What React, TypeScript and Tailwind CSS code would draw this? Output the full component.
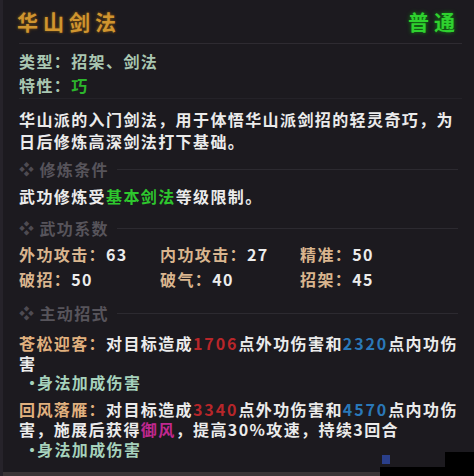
import React from "react";

const font = { fontFamily: '"Noto Sans CJK SC", "Noto Sans", sans-serif' };

function SectionHeader({ text }: { text: string }) {
  return (
    <div className="flex items-center h-[22px] text-[16px] font-bold tracking-[1.4px] text-[#57545b]">
      <span className="text-[15px] mr-[4px] text-[#4e4b52]">❖</span>
      <span>{text}</span>
      <div className="flex-1 h-px bg-[#2c2a30] ml-[8px] mr-[2px]" />
    </div>
  );
}

function Bullet() {
  return (
    <div className="flex items-center leading-[20px] text-[#a6d2bc] pl-[5px]">
      <span className="inline-block w-[9px] text-center mr-[4px]">·</span>
      <span>身法加成伤害</span>
    </div>
  );
}

export default function App() {
  return (
    <div
      style={font}
      className="relative w-[474px] h-[476px] overflow-hidden bg-[#1c1a1f] border-l-[3px] border-[#26232a]"
    >
      <div className="pl-[16px] pr-[14px]">
        {/* header */}
        <div className="h-[44px] flex items-center justify-between border-b border-[#2e2b31] mr-[-2px] pr-[2px]">
          <span className="ml-[-2px] text-[21px] font-bold tracking-[5px] text-[#d0952f] [text-shadow:0_0_3px_#8a5a10]">
            华山剑法
          </span>
          <span className="text-[21px] font-bold tracking-[5px] text-[#2fd12f] [text-shadow:0_0_4px_#0f8a0f]">
            普通
          </span>
        </div>

        <div className="text-[16px] font-bold tracking-[1.4px]">
          <div className="mt-[5px] leading-[24px] text-[#a9c6b1]">类型：招架、剑法</div>
          <div className="leading-[24px] text-[#a9c6b1]">
            特性：<span className="text-[#2cb52c]">巧</span>
          </div>
          <div className="h-px bg-[#242228] mt-[1px] mr-[-2px]" />

          <div className="mt-[9px] leading-[22px] text-[#ebebeb]">
            华山派的入门剑法，用于体悟华山派剑招的轻灵奇巧，为日后修炼高深剑法打下基础。
          </div>

          <div className="mt-[6px]">
            <SectionHeader text="修炼条件" />
          </div>
          <div className="mt-[5px] leading-[22px] text-[#ebebeb]">
            武功修炼受<span className="text-[#2ec72e]">基本剑法</span>等级限制。
          </div>

          <div className="mt-[10px]">
            <SectionHeader text="武功系数" />
          </div>
          <div className="mt-[3px] grid grid-cols-[141px_140px_1fr] leading-[25px]">
            <div>
              <span className="text-[#d9b58e]">外功攻击：</span>
              <span className="text-[#ececec]">63</span>
            </div>
            <div>
              <span className="text-[#d9b58e]">内功攻击：</span>
              <span className="text-[#ececec]">27</span>
            </div>
            <div>
              <span className="text-[#d9b58e]">精准：</span>
              <span className="text-[#ececec]">50</span>
            </div>
            <div>
              <span className="text-[#d9b58e]">破招：</span>
              <span className="text-[#ececec]">50</span>
            </div>
            <div>
              <span className="text-[#d9b58e]">破气：</span>
              <span className="text-[#ececec]">40</span>
            </div>
            <div>
              <span className="text-[#d9b58e]">招架：</span>
              <span className="text-[#ececec]">45</span>
            </div>
          </div>

          <div className="mt-[10px]">
            <SectionHeader text="主动招式" />
          </div>
          <div className="mt-[9px] leading-[20px] text-[#ebebeb]">
            <span className="text-[#e0b07e]">苍松迎客：</span>对目标造成
            <span className="text-[#b8262a] tracking-[1.9px]">1706</span>点外功伤害和
            <span className="text-[#2a78b8] tracking-[1.9px]">2320</span>点内功伤害
          </div>
          <div className="mt-[-1px]">
            <Bullet />
          </div>

          <div className="mt-[7px] leading-[20px] text-[#ebebeb]">
            <span className="text-[#e0b07e]">回风落雁：</span>对目标造成
            <span className="text-[#b8262a] tracking-[1.9px]">3340</span>点外功伤害和
            <span className="text-[#2a78b8] tracking-[1.9px]">4570</span>点内功伤害，施展后获得
            <span className="text-[#c0288f]">御风</span>，提高30%攻速，持续3回合
          </div>
          <Bullet />
        </div>
      </div>

      {/* bottom frame artifacts */}
      <div className="absolute left-0 right-0 bottom-0 h-[4px] bg-[#3a3436]" />
      <div className="absolute right-0 bottom-0 w-[94px] h-[9px] bg-black" />
      <div className="absolute right-0 bottom-[9px] w-[29px] h-[15px] bg-black" />
      <div className="absolute left-[379px] bottom-[12px] w-[8px] h-[9px] bg-[#2a3f8a]" />
    </div>
  );
}
